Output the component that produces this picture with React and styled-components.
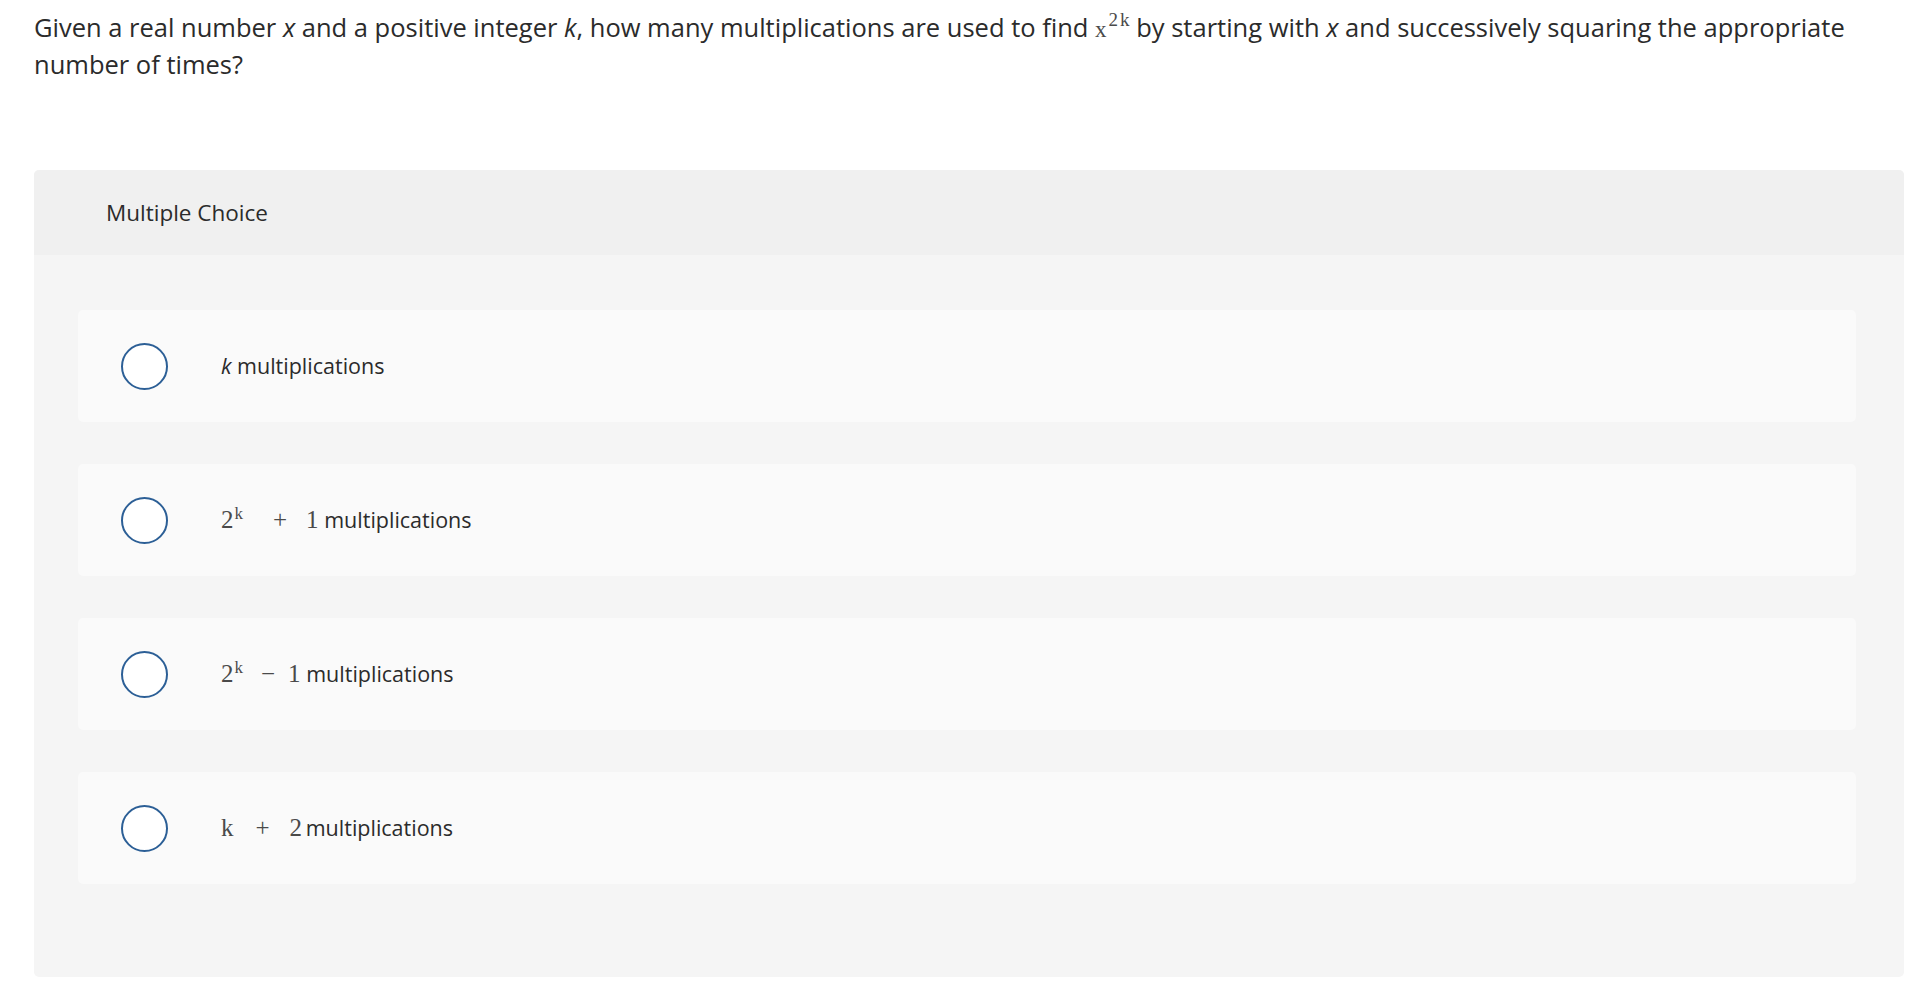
import React from "react";
import styled, { createGlobalStyle } from "styled-components";

const GlobalStyle = createGlobalStyle`
  html, body {
    margin: 0;
    padding: 0;
    background: #ffffff;
  }
  body {
    font-family: "Open Sans", "Liberation Sans", sans-serif;
    color: #2b2b2b;
  }
`;

function getOptions() {
  return [
    { id: "a", label: <><Var>k</Var> multiplications</> },
    {
      id: "b",
      label: (
        <>
          <MathExpr>
            2<Sup>k</Sup>
            <Op $l={30} $r={19}>+</Op>1
          </MathExpr>
          {" "}multiplications
        </>
      ),
    },
    {
      id: "c",
      label: (
        <>
          <MathExpr>
            2<Sup>k</Sup>
            <Op $l={18} $r={13}>−</Op>1
          </MathExpr>
          {" "}multiplications
        </>
      ),
    },
    {
      id: "d",
      label: (
        <>
          <MathExpr>
            k<Op $l={22} $r={20}>+</Op>2
          </MathExpr>
          <Tight> multiplications</Tight>
        </>
      ),
    },
  ];
}

export default function App() {
  const options = getOptions();
  return (
    <Page>
      <GlobalStyle />
      <Question>
        Given a real number <Var>x</Var> and a positive integer <Var>k</Var>,
        how many multiplications are used to find{" "}
        <MathExpr $inline>
          x<Sup $big>2<SupGap>k</SupGap></Sup>
        </MathExpr>{" "}
        by starting with <Var>x</Var> and successively squaring the appropriate
        number of times?
      </Question>
      <Card>
        <CardHeader>Multiple Choice</CardHeader>
        <Choices>
          {options.map((opt) => (
            <Choice key={opt.id}>
              <Radio type="radio" name="answer" value={opt.id} />
              <ChoiceText>{opt.label}</ChoiceText>
            </Choice>
          ))}
        </Choices>
      </Card>
    </Page>
  );
}

const Page = styled.div`
  padding: 9px 16px 8px 34px;
`;

const Question = styled.p`
  margin: 0;
  font-size: 25.5px;
  line-height: 37px;
  color: #2b2b2b;
`;

const Var = styled.i`
  font-style: italic;
`;

const MathExpr = styled.span`
  font-family: "Liberation Serif", "DejaVu Serif", serif;
  font-size: ${(p) => (p.$inline ? "23px" : "25px")};
  line-height: 1;
  color: #4a4a4a;
  white-space: nowrap;
`;

const Sup = styled.sup`
  font-size: ${(p) => (p.$big ? "19px" : "17px")};
  line-height: 0;
  vertical-align: baseline;
  position: relative;
  top: ${(p) => (p.$big ? "-11px" : "-9px")};
  margin-left: ${(p) => (p.$big ? "2px" : "1px")};
`;

const SupGap = styled.span`
  margin-left: 2px;
`;

const Op = styled.span`
  display: inline-block;
  margin-left: ${(p) => p.$l}px;
  margin-right: ${(p) => p.$r}px;
`;

const Tight = styled.span`
  margin-left: -2px;
`;

const Card = styled.div`
  margin-top: 87px;
  border-radius: 5px;
  overflow: hidden;
  background: #f5f5f5;
`;

const CardHeader = styled.div`
  height: 85px;
  display: flex;
  align-items: center;
  padding-left: 72px;
  background: #f0f0f0;
  font-size: 22.5px;
  color: #2b2b2b;
`;

const Choices = styled.div`
  display: flex;
  flex-direction: column;
  gap: 42px;
  padding: 55px 48px 93px 44px;
`;

const Choice = styled.label`
  height: 112px;
  display: flex;
  align-items: center;
  padding-left: 43px;
  background: #fafafa;
  border-radius: 5px;
`;

const Radio = styled.input`
  appearance: none;
  margin: 0;
  width: 47px;
  height: 47px;
  flex-shrink: 0;
  border: 2px solid #2c5f96;
  border-radius: 50%;
  background: #ffffff;
  box-sizing: border-box;
`;

const ChoiceText = styled.span`
  margin-left: 53px;
  font-size: 21.5px;
  line-height: 1.4;
  color: #2b2b2b;
`;
